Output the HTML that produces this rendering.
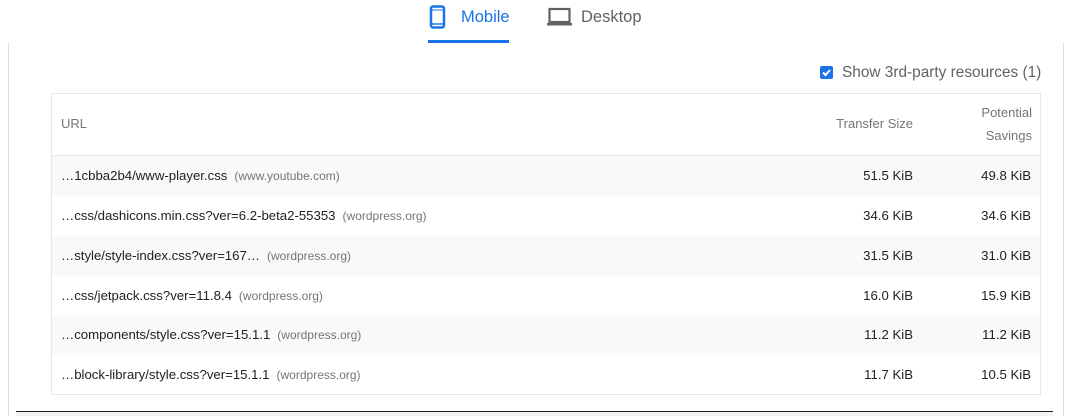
<!DOCTYPE html>
<html><head><style>
body{margin:0;width:1076px;height:416px;background:#fff;font-family:"Liberation Sans",Arial,sans-serif;position:relative;overflow:hidden}
.abs{position:absolute}
.row{position:absolute;left:52px;width:988px;height:40px;font-size:13.2px;color:#212121}
.row .u{position:absolute;left:9px;top:12px;white-space:nowrap}
.row .u span{color:#757575;font-size:12px;margin-left:7px}
.row .a{position:absolute;right:127px;top:12px}
.row .b{position:absolute;right:9px;top:12px}
.sh{background:#f8f9fa}
</style></head><body>
<svg class="abs" style="left:428px;top:5px" width="20" height="25" viewBox="0 0 20 25"><rect x="3" y="1.5" width="13" height="21" rx="2" fill="none" stroke="#1a73e8" stroke-width="2.5"/><line x1="3" y1="19" x2="16" y2="19" stroke="#1a73e8" stroke-width="1.5"/><line x1="3" y1="5" x2="16" y2="5" stroke="#1a73e8" stroke-width="1"/></svg>
<div class="abs" style="left:461px;top:8px;font-size:16.5px;color:#1a73e8">Mobile</div>
<div class="abs" style="left:428px;top:40px;width:81px;height:3px;background:#1a73e8"></div>
<svg class="abs" style="left:546px;top:7px" width="27" height="20" viewBox="0 0 27 20"><rect x="3.5" y="2" width="20" height="13" fill="none" stroke="#5f6368" stroke-width="2.2"/><rect x="1" y="16" width="25" height="2.5" fill="#5f6368"/></svg>
<div class="abs" style="left:581px;top:8px;font-size:16.5px;color:#5f6368">Desktop</div>
<div class="abs" style="left:8px;top:43px;width:1px;height:373px;background:#ddd"></div>
<div class="abs" style="left:1063px;top:43px;width:1px;height:373px;background:#ddd"></div>
<div class="abs" style="left:820px;top:66px;width:13px;height:13px;background:#1a73e8;border-radius:2px"><svg width="13" height="13"><path d="M3 6.5l2.5 2.5 4.5-5" stroke="#fff" stroke-width="2" fill="none"/></svg></div>
<div class="abs" style="left:842px;top:64px;font-size:15.4px;color:#5f6368">Show 3rd-party resources (1)</div>
<div class="abs" style="left:51px;top:93px;width:988px;height:300px;border:1px solid #e8e8e8"></div>
<div class="abs" style="left:61px;top:116px;font-size:13px;color:#757575">URL</div>
<div class="abs" style="left:800px;top:116px;width:113px;text-align:right;font-size:13px;color:#757575">Transfer Size</div>
<div class="abs" style="left:940px;top:101px;font-size:13px;color:#757575;text-align:right;width:92px;line-height:23px">Potential<br>Savings</div>
<div class="abs" style="left:52px;top:155px;width:988px;height:1px;background:#e8e8e8"></div>
<div class="row sh" style="top:156px"><div class="u">…1cbba2b4/www-player.css<span>(www.youtube.com)</span></div><div class="a">51.5 KiB</div><div class="b">49.8 KiB</div></div>
<div class="row" style="top:196px"><div class="u">…css/dashicons.min.css?ver=6.2-beta2-55353<span>(wordpress.org)</span></div><div class="a">34.6 KiB</div><div class="b">34.6 KiB</div></div>
<div class="row sh" style="top:236px"><div class="u">…style/style-index.css?ver=167…<span>(wordpress.org)</span></div><div class="a">31.5 KiB</div><div class="b">31.0 KiB</div></div>
<div class="row" style="top:276px"><div class="u">…css/jetpack.css?ver=11.8.4<span>(wordpress.org)</span></div><div class="a">16.0 KiB</div><div class="b">15.9 KiB</div></div>
<div class="row sh" style="top:315px"><div class="u">…components/style.css?ver=15.1.1<span>(wordpress.org)</span></div><div class="a">11.2 KiB</div><div class="b">11.2 KiB</div></div>
<div class="row" style="top:355px"><div class="u">…block-library/style.css?ver=15.1.1<span>(wordpress.org)</span></div><div class="a">11.7 KiB</div><div class="b">10.5 KiB</div></div>
<div class="abs" style="left:16px;top:411px;width:1037px;height:1px;background:#202124"></div>
<div class="abs" style="left:16px;top:412px;width:1037px;height:4px;background:#f1f3f4"></div>
</body></html>
